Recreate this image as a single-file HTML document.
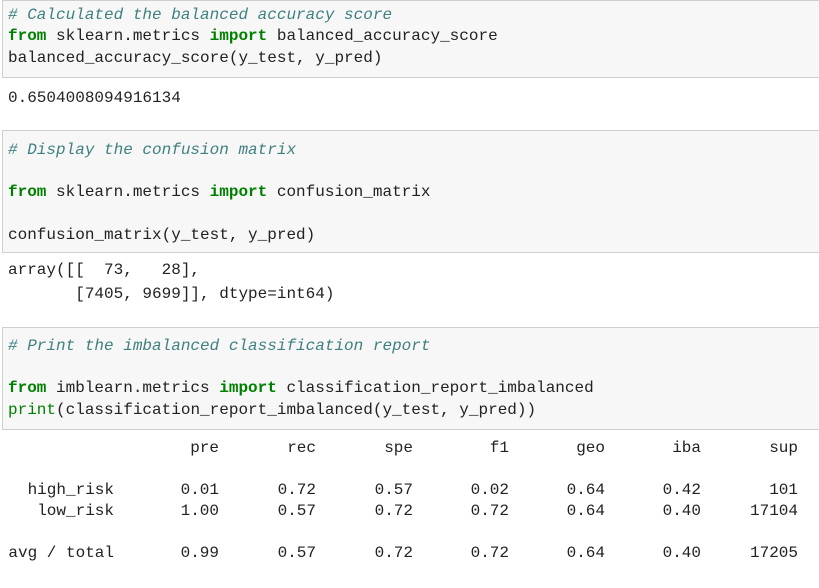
<!DOCTYPE html>
<html><head><meta charset="utf-8"><style>
body{margin:0;width:819px;height:588px;background:#fff;position:relative;overflow:hidden;font-family:"Liberation Mono",monospace;font-size:16px;color:#222}
.box{position:absolute;left:2px;right:-2px;background:#f7f7f7;border:1px solid #cfcfcf}
.l{position:absolute;left:8px;white-space:pre;line-height:20px}
.c{color:#408080;font-style:italic}
.k{color:#008000;font-weight:bold}
.b{color:#008000}
.r{position:absolute;white-space:pre;line-height:20px;text-align:right}
</style></head><body>
<div class="box" style="top:0;height:76px"></div>
<div class="l" style="top:5px"><span class="c"># Calculated the balanced accuracy score</span></div>
<div class="l" style="top:26px"><span class="k">from</span> sklearn.metrics <span class="k">import</span> balanced_accuracy_score</div>
<div class="l" style="top:48px">balanced_accuracy_score(y_test, y_pred)</div>
<div class="l" style="top:88px">0.6504008094916134</div>

<div class="box" style="top:130px;height:121px"></div>
<div class="l" style="top:140px"><span class="c"># Display the confusion matrix</span></div>
<div class="l" style="top:182px"><span class="k">from</span> sklearn.metrics <span class="k">import</span> confusion_matrix</div>
<div class="l" style="top:225px">confusion_matrix(y_test, y_pred)</div>
<div class="l" style="top:260px">array([[  73,   28],</div>
<div class="l" style="top:284px">       [7405, 9699]], dtype=int64)</div>

<div class="box" style="top:327px;height:101px"></div>
<div class="l" style="top:336px"><span class="c"># Print the imbalanced classification report</span></div>
<div class="l" style="top:378px"><span class="k">from</span> imblearn.metrics <span class="k">import</span> classification_report_imbalanced</div>
<div class="l" style="top:400px"><span class="b">print</span>(classification_report_imbalanced(y_test, y_pred))</div>

<div class="r" style="top:438px;right:600px">pre</div>
<div class="r" style="top:438px;right:503px">rec</div>
<div class="r" style="top:438px;right:406px">spe</div>
<div class="r" style="top:438px;right:310px">f1</div>
<div class="r" style="top:438px;right:214px">geo</div>
<div class="r" style="top:438px;right:118px">iba</div>
<div class="r" style="top:438px;right:21px">sup</div>

<div class="r" style="top:480px;right:705px">high_risk</div>
<div class="r" style="top:480px;right:600px">0.01</div>
<div class="r" style="top:480px;right:503px">0.72</div>
<div class="r" style="top:480px;right:406px">0.57</div>
<div class="r" style="top:480px;right:310px">0.02</div>
<div class="r" style="top:480px;right:214px">0.64</div>
<div class="r" style="top:480px;right:118px">0.42</div>
<div class="r" style="top:480px;right:21px">101</div>

<div class="r" style="top:501px;right:705px">low_risk</div>
<div class="r" style="top:501px;right:600px">1.00</div>
<div class="r" style="top:501px;right:503px">0.57</div>
<div class="r" style="top:501px;right:406px">0.72</div>
<div class="r" style="top:501px;right:310px">0.72</div>
<div class="r" style="top:501px;right:214px">0.64</div>
<div class="r" style="top:501px;right:118px">0.40</div>
<div class="r" style="top:501px;right:21px">17104</div>

<div class="r" style="top:543px;right:705px">avg / total</div>
<div class="r" style="top:543px;right:600px">0.99</div>
<div class="r" style="top:543px;right:503px">0.57</div>
<div class="r" style="top:543px;right:406px">0.72</div>
<div class="r" style="top:543px;right:310px">0.72</div>
<div class="r" style="top:543px;right:214px">0.64</div>
<div class="r" style="top:543px;right:118px">0.40</div>
<div class="r" style="top:543px;right:21px">17205</div>
</body></html>
